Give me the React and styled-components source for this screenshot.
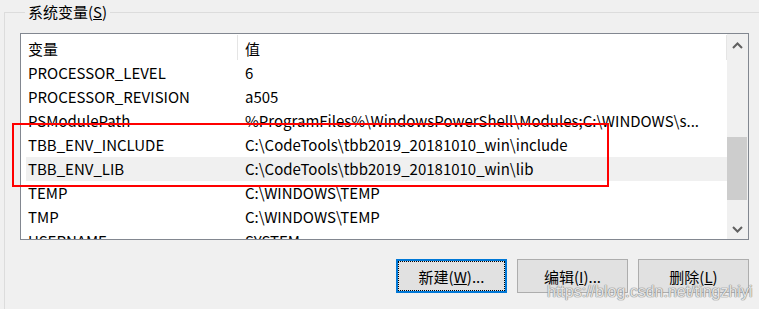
import React from 'react';
import styled, { createGlobalStyle } from 'styled-components';

const GlobalStyle = createGlobalStyle`
  html, body {
    margin: 0;
    background-color: #F0F0F0;
  }

  body {
    font-family: "Noto Sans CJK SC", "Noto Sans", sans-serif;
    font-size: 15px;
    color: #000000;
  }
`;

const variables = [
  { name: 'PROCESSOR_LEVEL', value: '6' },
  { name: 'PROCESSOR_REVISION', value: 'a505' },
  { name: 'PSModulePath', value: '%ProgramFiles%\\WindowsPowerShell\\Modules;C:\\WINDOWS\\s...' },
  { name: 'TBB_ENV_INCLUDE', value: 'C:\\CodeTools\\tbb2019_20181010_win\\include' },
  { name: 'TBB_ENV_LIB', value: 'C:\\CodeTools\\tbb2019_20181010_win\\lib', hover: true },
  { name: 'TEMP', value: 'C:\\WINDOWS\\TEMP' },
  { name: 'TMP', value: 'C:\\WINDOWS\\TEMP' },
  { name: 'USERNAME', value: 'SYSTEM' },
];

function App() {
  return (
    <Page>
      <GlobalStyle />
      <GroupBox>
        <Legend>系统变量(<u>S</u>)</Legend>
        <ListBox>
          <ListContent>
            <HeaderRow>
              <HeaderCell $width={ 217 }>变量</HeaderCell>
              <HeaderCell>值</HeaderCell>
            </HeaderRow>
            { variables.map((item) => (
              <Row key={ item.name } $hover={ item.hover }>
                <Cell>{ item.name }</Cell>
                <Cell>{ item.value }</Cell>
              </Row>
            )) }
          </ListContent>
          <ScrollBar>
            <ArrowButton>
              <svg width="11" height="7" viewBox="0 0 11 7">
                <path d="M1 6 L5.5 1.5 L10 6" fill="none" stroke="#606060" strokeWidth="2" />
              </svg>
            </ArrowButton>
            <Track>
              <Thumb style={ { marginTop: 82, height: 63 } } />
            </Track>
            <ArrowButton>
              <svg width="11" height="7" viewBox="0 0 11 7">
                <path d="M1 1 L5.5 5.5 L10 1" fill="none" stroke="#606060" strokeWidth="2" />
              </svg>
            </ArrowButton>
          </ScrollBar>
        </ListBox>
        <ButtonRow>
          <Button type="button" $focused>新建(<u>W</u>)...</Button>
          <Button type="button">编辑(<u>I</u>)...</Button>
          <Button type="button">删除(<u>L</u>)</Button>
        </ButtonRow>
      </GroupBox>
      <Highlight />
      <Watermark>https://blog.csdn.net/tingzhiyi</Watermark>
    </Page>
  );
}

export default App;

const Page = styled.div`
  position: relative;
  width: 759px;
  height: 309px;
  overflow: hidden;
  padding-top: 2px;
  box-sizing: border-box;
`;

const GroupBox = styled.fieldset`
  margin: 0 -20px 0 4px;
  padding: 11px 0 0 15px;
  border: 1px solid #DCDCDC;
  height: 400px;
  box-sizing: border-box;
  min-width: 0;
`;

const Legend = styled.legend`
  margin-left: 5px;
  padding: 0 3px;
  line-height: 20px;
  font-size: 15px;
`;

const ListBox = styled.div`
  display: flex;
  width: 729px;
  height: 207px;
  border: 1px solid #828790;
  background-color: #FFFFFF;
  box-sizing: border-box;
`;

const ListContent = styled.div`
  flex: 1;
  min-width: 0;
  overflow: hidden;
`;

const HeaderRow = styled.div`
  display: flex;
  height: 27px;
`;

const HeaderCell = styled.div`
  ${ ({ $width }) => ($width ? `width: ${$width}px;` : 'flex: 1;') }
  flex-shrink: 0;
  padding-left: 7px;
  box-sizing: border-box;
  margin-top: 1px;
  height: 25px;
  line-height: 27px;
  border-right: 1px solid #E5E5E5;
`;

const Row = styled.div`
  display: grid;
  grid-template-columns: 217px 1fr;
  height: 24px;
  margin-left: 5px;
  background-color: ${ ({ $hover }) => ($hover ? '#F0F0F0' : 'transparent') };
`;

const Cell = styled.div`
  padding-left: 2px;
  line-height: 24px;
  white-space: nowrap;
  overflow: hidden;
`;

const ScrollBar = styled.div`
  display: flex;
  flex-direction: column;
  width: 21px;
  flex-shrink: 0;
  background-color: #F0F0F0;
`;

const ArrowButton = styled.div`
  display: flex;
  align-items: center;
  justify-content: center;
  height: 21px;
  padding-top: 2px;
  box-sizing: border-box;
  flex-shrink: 0;
`;

const Track = styled.div`
  flex: 1;
  display: flex;
  flex-direction: column;
`;

const Thumb = styled.div`
  width: 20px;
  background-color: #CDCDCD;
`;

const ButtonRow = styled.div`
  display: flex;
  justify-content: flex-end;
  gap: 10px;
  width: 729px;
  margin-top: 19px;
`;

const Button = styled.button`
  width: 111px;
  height: 34px;
  padding: 0;
  font-family: "Noto Sans CJK SC", "Noto Sans", sans-serif;
  font-size: 15px;
  color: #000000;
  background-color: #E1E1E1;
  border: ${ ({ $focused }) => ($focused ? '2px solid #0078D7' : '1px solid #ADADAD') };
  outline: ${ ({ $focused }) => ($focused ? '1px dotted #000000' : 'none') };
  outline-offset: -3px;
  box-sizing: border-box;
`;

const Highlight = styled.div`
  position: absolute;
  left: 12px;
  top: 123px;
  width: 597px;
  height: 64px;
  border: 2px solid #FF0000;
  box-sizing: border-box;
  pointer-events: none;
`;

const Watermark = styled.div`
  position: absolute;
  left: 547px;
  top: 283px;
  font-family: "Liberation Sans", Arial, sans-serif;
  font-size: 16px;
  color: rgba(240, 240, 240, 0.9);
  text-shadow: 0 0 1px #8A8A8A, 0 0 1px #8A8A8A, 0 0 1px #8A8A8A;
  white-space: nowrap;
`;
